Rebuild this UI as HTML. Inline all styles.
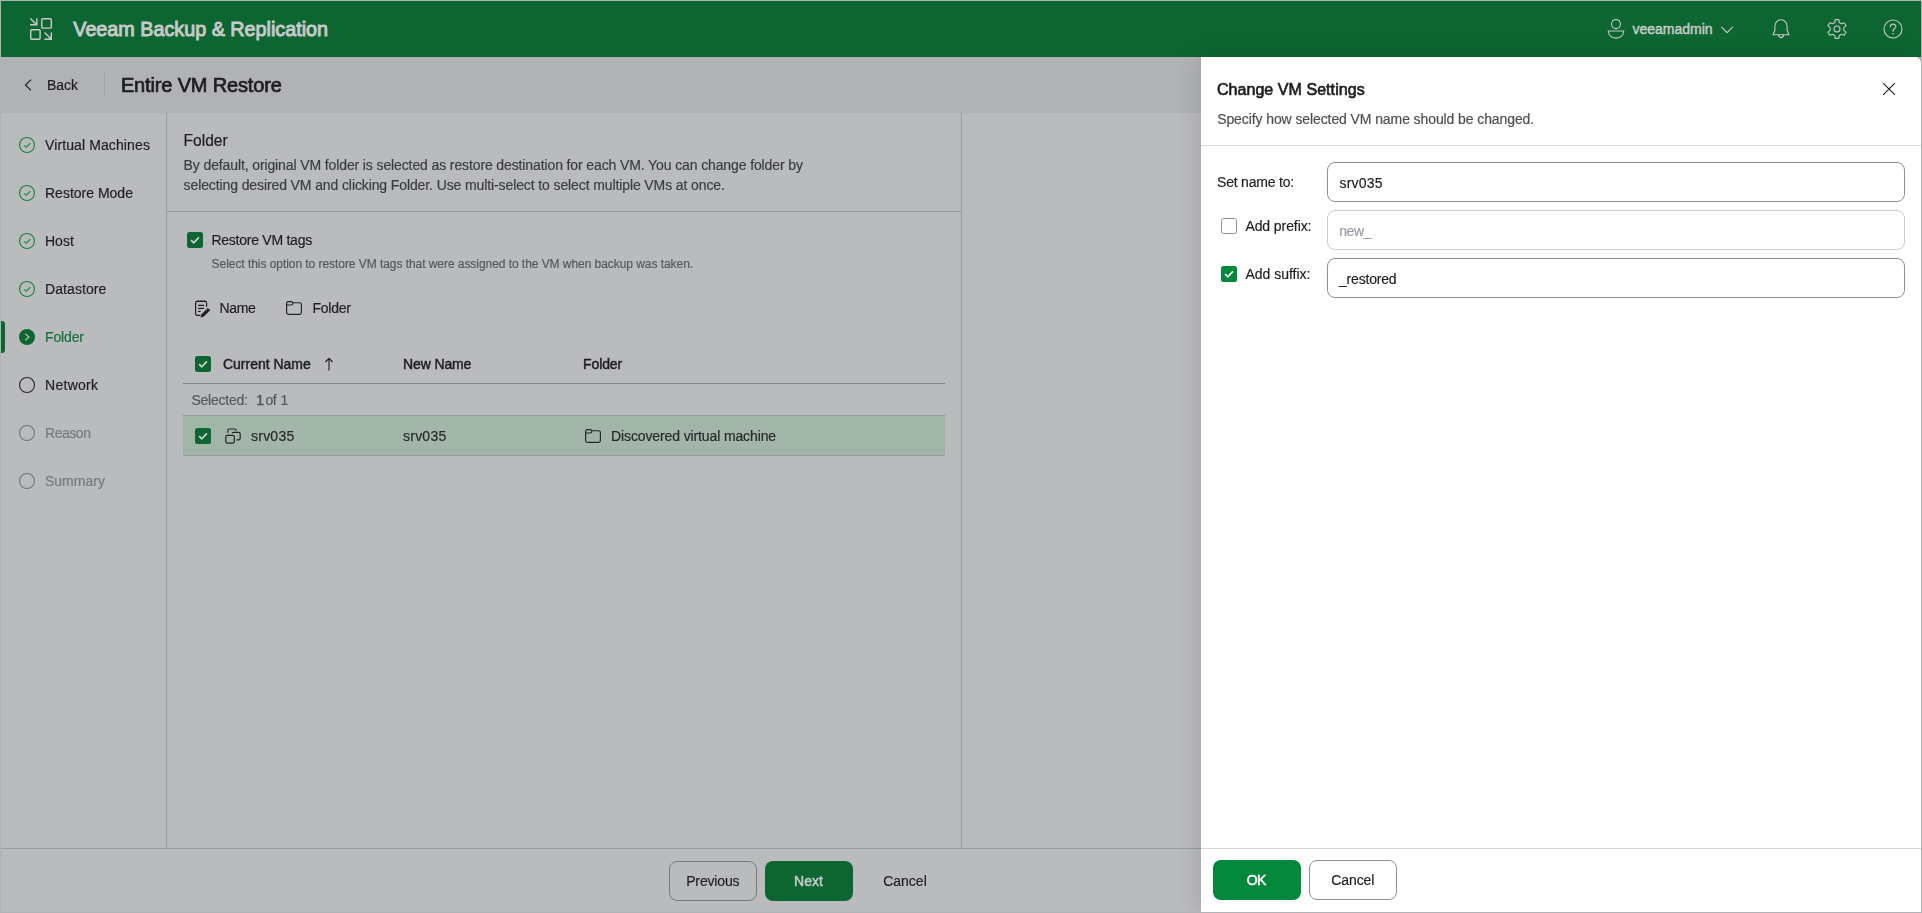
<!DOCTYPE html>
<html>
<head>
<meta charset="utf-8">
<title>Veeam Backup &amp; Replication</title>
<style>
html,body{margin:0;padding:0;}
body{width:1922px;height:913px;overflow:hidden;background:#b1b2b4;font-family:"Liberation Sans",sans-serif;position:relative;}
#app{position:absolute;left:1px;top:1px;width:1920px;height:911px;background:#babbbd;overflow:hidden;}
.abs{position:absolute;}
.t{position:absolute;white-space:nowrap;line-height:20px;height:20px;color:#1d1e20;font-size:14px;-webkit-text-stroke:0.18px currentColor;}
.ly{position:absolute;left:0;top:0;right:0;bottom:0;will-change:transform;}
#hdr{left:0;top:0;width:1920px;height:56px;background:#0d6632;}
#sub{left:0;top:56px;width:1920px;height:56px;background:#b1b2b4;}
#side{left:0;top:112px;width:165px;height:735px;border-right:1px solid #9a9ea2;}
#main{left:166px;top:112px;width:794px;height:735px;border-right:1px solid #9a9ea2;}
#foot{left:0;top:847px;width:1200px;height:64px;border-top:1px solid #9a9ea2;}
.btn{position:absolute;box-sizing:border-box;border-radius:8px;height:40px;}
#panel{left:1200px;top:56px;width:720px;height:855px;background:#fff;border-top-right-radius:6px;box-shadow:-4px 0 22px rgba(0,0,0,0.11);}
.inp{position:absolute;box-sizing:border-box;left:126px;width:578px;height:40px;border:1px solid #8a9099;border-radius:8px;}
svg{position:absolute;overflow:visible;}
.cb{position:absolute;width:16px;height:16px;border-radius:2.5px;background:#0d6632;}
.cb svg{left:0;top:0;}
</style>
</head>
<body>
<div id="app">
<div id="hdr" class="abs">
<svg style="left:28px;top:16px" width="24" height="24" viewBox="29 17 24 24" fill="none" stroke="#c9caca" stroke-width="1.4">
  <path d="M30.4 18.4 L36.8 24.8 M36.8 18.2 V24.8 H30.1" />
  <rect x="41.8" y="18.7" width="9.5" height="9.4" rx="0.9"/>
  <rect x="30.7" y="29.8" width="9.4" height="9.4" rx="0.9"/>
  <path d="M44.6 32.6 L51.3 39.3 M51.3 32.4 V39.3 H44.4" />
</svg>
<div class="t" style="left:72.30px;top:13.00px;font-size:19.75px;color:#c8c9c9;height:30px;line-height:30px;-webkit-text-stroke:0.95px #c8c9c9;">Veeam Backup &amp; Replication</div>
<svg style="left:1606px;top:17px" width="20" height="24" viewBox="1607 18 20 24" fill="none" stroke="#c3c8c5" stroke-width="1.1">
  <circle cx="1616" cy="24.1" r="4.5"/>
  <path d="M1608.3 31 H1623.7 C1623.7 35.3 1620.4 38.1 1616 38.1 C1611.6 38.1 1608.3 35.3 1608.3 31 Z"/>
</svg>
<div class="t" style="left:1631.40px;top:18.00px;font-size:14px;color:#c9cbca;-webkit-text-stroke:0.45px #c9cbca;">veeamadmin</div>
<svg style="left:1718.1px;top:23.1px" width="16" height="12" viewBox="1720 25 16 12" fill="none" stroke="#c3c8c5" stroke-width="1.1"><path d="M1722.4 27.8 L1728.1 33.6 L1733.8 27.8"/></svg>
<svg style="left:1769.1px;top:16px" width="22" height="24" viewBox="1771 18 22 24" fill="none" stroke="#c3c8c5" stroke-width="1.1" stroke-linejoin="round">
  <path d="M1774 35.8 H1790 L1788.1 31.3 V27.2 C1788.1 23.5 1785.5 20.8 1782 20.8 C1778.5 20.8 1775.9 23.5 1775.9 27.2 V31.3 Z"/>
  <path d="M1779.4 35.9 C1779.6 37.5 1780.6 38.6 1782 38.6 C1783.4 38.6 1784.4 37.5 1784.6 35.9"/>
</svg>
<svg style="left:1823.9px;top:16.1px" width="24" height="24" viewBox="-12 -12 24 24" fill="none" stroke="#c3c8c5" stroke-width="1.1" stroke-linejoin="round"><circle cx="0" cy="0" r="3"/><path d="M-1.82 -9.37 L1.82 -9.37 L2.26 -6.57 L4.56 -5.25 L7.21 -6.27 L9.03 -3.11 L6.82 -1.33 L6.82 1.33 L9.03 3.11 L7.21 6.27 L4.56 5.25 L2.26 6.57 L1.82 9.37 L-1.82 9.37 L-2.26 6.57 L-4.56 5.25 L-7.21 6.27 L-9.03 3.11 L-6.82 1.33 L-6.82 -1.33 L-9.03 -3.11 L-7.21 -6.27 L-4.56 -5.25 L-2.26 -6.57 Z"/></svg>
<svg style="left:1880px;top:16.1px" width="24" height="24" viewBox="-12 -12 24 24" fill="none" stroke="#c3c8c5" stroke-width="1.1">
  <circle cx="0" cy="0" r="9"/>
  <path d="M-2.7 -2.3 C-2.7 -4 -1.5 -4.9 0 -4.9 C1.6 -4.9 2.8 -3.9 2.8 -2.5 C2.8 -0.6 0 -0.3 0 2.2" stroke-linecap="round"/>
  <circle cx="0" cy="4.7" r="0.8" fill="#c3c8c5" stroke="none"/>
</svg>
</div>
<div id="sub" class="abs"><div class="ly">
<svg style="left:22px;top:21px" width="10" height="14" viewBox="0 0 10 14" fill="none" stroke="#1d1e20" stroke-width="1.1"><path d="M8 1.6 L2.4 7 L8 12.4"/></svg>
<div class="t" style="left:45.90px;top:18.00px;font-size:14px;color:#1d1e20;">Back</div>
<div class="abs" style="left:103px;top:16px;width:1px;height:24px;background:#a2a3a5;"></div>
<div class="t" style="left:119.90px;top:13.00px;font-size:20px;color:#1d1e20;height:30px;line-height:30px;letter-spacing:-0.15px;-webkit-text-stroke:0.7px #1d1e20;">Entire VM Restore</div>
</div></div>
<div id="side" class="abs"><div class="ly">
<svg style="left:16px;top:22px" width="20" height="20" viewBox="-10 -10 20 20" fill="none" stroke="#15803c" stroke-width="1.1"><circle r="7.45"/><path d="M-2.8 0.3 L-0.7 2.3 L3.3 -1.9"/></svg>
<div class="t" style="left:44.00px;top:22.00px;font-size:14px;color:#1d1e20;letter-spacing:0.11px;">Virtual Machines</div>
<svg style="left:16px;top:70px" width="20" height="20" viewBox="-10 -10 20 20" fill="none" stroke="#15803c" stroke-width="1.1"><circle r="7.45"/><path d="M-2.8 0.3 L-0.7 2.3 L3.3 -1.9"/></svg>
<div class="t" style="left:44.00px;top:70.00px;font-size:14px;color:#1d1e20;">Restore Mode</div>
<svg style="left:16px;top:118px" width="20" height="20" viewBox="-10 -10 20 20" fill="none" stroke="#15803c" stroke-width="1.1"><circle r="7.45"/><path d="M-2.8 0.3 L-0.7 2.3 L3.3 -1.9"/></svg>
<div class="t" style="left:44.00px;top:118.00px;font-size:14px;color:#1d1e20;">Host</div>
<svg style="left:16px;top:166px" width="20" height="20" viewBox="-10 -10 20 20" fill="none" stroke="#15803c" stroke-width="1.1"><circle r="7.45"/><path d="M-2.8 0.3 L-0.7 2.3 L3.3 -1.9"/></svg>
<div class="t" style="left:44.00px;top:166.00px;font-size:14px;color:#1d1e20;letter-spacing:0.08px;">Datastore</div>
<div class="abs" style="left:0;top:208px;width:4px;height:32px;background:#0d6632;border-radius:0 3px 3px 0;"></div>
<svg style="left:16px;top:214px" width="20" height="20" viewBox="-10 -10 20 20" fill="none" stroke="none" stroke-width="1.1"><circle r="8" fill="#0d6632" stroke="none"/><path d="M-1.7 -3.4 L1.9 0 L-1.7 3.4" stroke="#c3c8c5"/></svg>
<div class="t" style="left:44.00px;top:214.00px;font-size:14px;color:#14703a;letter-spacing:-0.13px;">Folder</div>
<svg style="left:16px;top:262px" width="20" height="20" viewBox="-10 -10 20 20" fill="none" stroke="#232426" stroke-width="1.1"><circle r="7.45"/></svg>
<div class="t" style="left:44.00px;top:262.00px;font-size:14px;color:#1d1e20;letter-spacing:0.28px;">Network</div>
<svg style="left:16px;top:310px" width="20" height="20" viewBox="-10 -10 20 20" fill="none" stroke="#6d767b" stroke-width="1.1"><circle r="7.45"/></svg>
<div class="t" style="left:44.00px;top:310.00px;font-size:14px;color:#727b80;letter-spacing:-0.46px;">Reason</div>
<svg style="left:16px;top:358px" width="20" height="20" viewBox="-10 -10 20 20" fill="none" stroke="#6d767b" stroke-width="1.1"><circle r="7.45"/></svg>
<div class="t" style="left:44.00px;top:358.00px;font-size:14px;color:#727b80;">Summary</div>
</div></div>
<div id="main" class="abs"><div class="ly">
<div class="t" style="left:16.50px;top:18.00px;font-size:15.6px;color:#1d1e20;-webkit-text-stroke:0.2px #1d1e20;">Folder</div>
<div class="t" style="left:16.60px;top:42.00px;font-size:14px;color:#3a3c3f;letter-spacing:-0.116px;">By default, original VM folder is selected as restore destination for each VM. You can change folder by</div>
<div class="t" style="left:16.60px;top:62.00px;font-size:14px;color:#3a3c3f;letter-spacing:-0.108px;">selecting desired VM and clicking Folder. Use multi-select to select multiple VMs at once.</div>
<div class="abs" style="left:0;top:98px;width:794px;height:1px;background:#9a9ea2;"></div>
<div class="cb" style="left:20px;top:119px;"><svg width="16" height="16" viewBox="0 0 16 16" fill="none" stroke="#cdd0ce" stroke-width="1.7"><path d="M4.1 8.2 L6.8 10.8 L11.9 5.4"/></svg></div>
<div class="t" style="left:44.40px;top:117.00px;font-size:14px;color:#1d1e20;letter-spacing:-0.247px;">Restore VM tags</div>
<div class="t" style="left:44.60px;top:141.00px;font-size:12px;color:#55585c;letter-spacing:-0.054px;">Select this option to restore VM tags that were assigned to the VM when backup was taken.</div>
<svg style="left:27px;top:186px" width="18" height="20" viewBox="194 299 18 20" fill="none" stroke="#1f2022" stroke-width="1.2">
  <path d="M200.2 315.4 H197.2 C196.2 315.4 195.6 314.8 195.6 313.8 V302.9 C195.6 301.9 196.2 301.3 197.2 301.3 H205 C206 301.3 206.6 301.9 206.6 302.9 V306.8"/>
  <path d="M198 300 V301.3 M201.1 300 V301.3 M204.3 300 V301.3" stroke-width="1"/>
  <path d="M198.2 305.3 H204.1 M198.2 308.3 H204.1 M198.2 311.4 H200.6"/>
  <path d="M208 308.4 L209.8 310.2 L203.6 316.2 L200.9 317 L201.7 314.4 Z" fill="#1f2022" stroke-width="0.8" stroke-linejoin="round"/>
</svg>
<div class="t" style="left:52.40px;top:185.00px;font-size:14px;color:#1d1e20;letter-spacing:-0.282px;">Name</div>
<svg style="left:119px;top:188px" width="16" height="14" viewBox="0 0 16 14" fill="none" stroke="#1f2022" stroke-width="1.15"><path d="M0.6 3.4 V11.4 C0.6 12.5 1.4 13.3 2.5 13.3 H13.5 C14.6 13.3 15.4 12.5 15.4 11.4 V3.6 C15.4 2.5 14.6 1.7 13.5 1.7 H6.9 M0.6 3.4 V2.4 C0.6 1.3 1.4 0.6 2.4 0.6 H5 C6.2 0.6 6.9 1.2 6.9 2.2 C6.9 3.2 6.2 4 5 4 H0.6"/></svg>
<div class="t" style="left:145.50px;top:185.00px;font-size:14px;color:#1d1e20;letter-spacing:-0.257px;">Folder</div>
<div class="cb" style="left:28px;top:243px;"><svg width="16" height="16" viewBox="0 0 16 16" fill="none" stroke="#cdd0ce" stroke-width="1.7"><path d="M4.1 8.2 L6.8 10.8 L11.9 5.4"/></svg></div>
<div class="t" style="left:56.00px;top:241.00px;font-size:14px;color:#1d1e20;letter-spacing:-0.02px;-webkit-text-stroke:0.45px #1d1e20;">Current Name</div>
<svg style="left:156px;top:243px" width="12" height="16" viewBox="323 356 12 16" fill="none" stroke="#1f2022" stroke-width="1.1"><path d="M329 370.6 V358.4 M325.4 362 L329 358.3 L332.6 362"/></svg>
<div class="t" style="left:236.10px;top:241.00px;font-size:14px;color:#1d1e20;letter-spacing:-0.135px;-webkit-text-stroke:0.45px #1d1e20;">New Name</div>
<div class="t" style="left:416.10px;top:241.00px;font-size:14px;color:#1d1e20;letter-spacing:-0.137px;-webkit-text-stroke:0.45px #1d1e20;">Folder</div>
<div class="abs" style="left:16px;top:270px;width:762px;height:1px;background:#82868a;"></div>
<div class="t" style="left:24.40px;top:277.00px;font-size:14px;color:#55585c;letter-spacing:-0.234px;">Selected:</div>
<div class="t" style="left:89.30px;top:277.00px;font-size:14px;color:#55585c;-webkit-text-stroke:0.45px #55585c;">1</div>
<div class="t" style="left:98.40px;top:277.00px;font-size:14px;color:#55585c;letter-spacing:-0.45px;word-spacing:1px;">of 1</div>
<div class="abs" style="left:16px;top:302px;width:762px;height:41px;background:#a1b6a9;box-sizing:border-box;border-top:1px solid #999c9e;border-bottom:1px solid #999c9e;"></div>
<div class="cb" style="left:28px;top:315px;"><svg width="16" height="16" viewBox="0 0 16 16" fill="none" stroke="#cdd0ce" stroke-width="1.7"><path d="M4.1 8.2 L6.8 10.8 L11.9 5.4"/></svg></div>
<svg style="left:57px;top:313.6px" width="18" height="18" viewBox="224 427 18 18" fill="none" stroke="#222426" stroke-width="1.2">
  <rect x="225.8" y="435.3" width="8.5" height="7.8" rx="1.6"/>
  <path d="M236.4 439.9 H238.5 C239.5 439.9 240.2 439.2 240.2 438.2 V434 C240.2 433 239.5 432.3 238.5 432.3 H233.6 C232.9 432.3 232.4 432.6 232.1 433.1"/>
  <path d="M227.8 432.8 V430.7 C227.8 429.7 228.5 429 229.5 429 H234.5 C235.5 429 236.2 429.7 236.2 430.7"/>
</svg>
<div class="t" style="left:84.00px;top:313.00px;font-size:14px;color:#26282a;letter-spacing:0.236px;">srv035</div>
<div class="t" style="left:236.00px;top:313.00px;font-size:14px;color:#26282a;letter-spacing:0.236px;">srv035</div>
<svg style="left:418px;top:316px" width="16" height="14" viewBox="0 0 16 14" fill="none" stroke="#222426" stroke-width="1.15"><path d="M0.6 3.4 V11.4 C0.6 12.5 1.4 13.3 2.5 13.3 H13.5 C14.6 13.3 15.4 12.5 15.4 11.4 V3.6 C15.4 2.5 14.6 1.7 13.5 1.7 H6.9 M0.6 3.4 V2.4 C0.6 1.3 1.4 0.6 2.4 0.6 H5 C6.2 0.6 6.9 1.2 6.9 2.2 C6.9 3.2 6.2 4 5 4 H0.6"/></svg>
<div class="t" style="left:444.10px;top:313.00px;font-size:14px;color:#26282a;letter-spacing:-0.123px;">Discovered virtual machine</div>
</div></div>
<div id="foot" class="abs"><div class="ly">
<div class="btn" style="left:668px;top:12px;width:88px;border:1px solid #77797c;"></div>
<div class="t" style="left:685.20px;top:22.00px;font-size:14px;color:#1d1e20;letter-spacing:-0.153px;">Previous</div>
<div class="btn" style="left:764px;top:12px;width:88px;background:#0d6632;"></div>
<div class="t" style="left:793.00px;top:22.00px;font-size:14px;color:#c9cbca;letter-spacing:0.07px;-webkit-text-stroke:0.45px #c9cbca;">Next</div>
<div class="t" style="left:882.20px;top:22.00px;font-size:14px;color:#1d1e20;">Cancel</div>
</div></div>
<div id="panel" class="abs"><div class="ly">
<div class="t" style="left:15.90px;top:21.00px;font-size:16px;color:#1d1e20;height:24px;line-height:24px;letter-spacing:0.06px;-webkit-text-stroke:0.65px #1d1e20;">Change VM Settings</div>
<svg style="left:681px;top:25px" width="14" height="14" viewBox="1882 82 14 14" fill="none" stroke="#1d1e20" stroke-width="1.1"><path d="M1883.1 83.1 L1894.9 94.9 M1894.9 83.1 L1883.1 94.9"/></svg>
<div class="t" style="left:16.20px;top:52.00px;font-size:14px;color:#4b4e53;letter-spacing:-0.096px;">Specify how selected VM name should be changed.</div>
<div class="abs" style="left:0;top:88px;width:720px;height:1px;background:#d5d8db;"></div>
<div class="t" style="left:16.00px;top:115.00px;font-size:14px;color:#1d1e20;letter-spacing:-0.2px;">Set name to:</div>
<div class="inp" style="top:105px;"></div>
<div class="t" style="left:138.40px;top:116.00px;font-size:14px;color:#1d1e20;letter-spacing:0.236px;">srv035</div>
<div class="abs" style="left:20px;top:161px;width:16px;height:16px;box-sizing:border-box;border:1px solid #8a9099;border-radius:2.5px;background:#fff;"></div>
<div class="t" style="left:44.40px;top:159.00px;font-size:14px;color:#1d1e20;letter-spacing:-0.08px;">Add prefix:</div>
<div class="inp" style="top:153px;border-color:#c9cdd1;"></div>
<div class="t" style="left:138.20px;top:164.00px;font-size:14px;color:#969ca2;letter-spacing:-0.39px;">new_</div>
<div class="cb" style="left:20px;top:209px;background:#04883b;"><svg width="16" height="16" viewBox="0 0 16 16" fill="none" stroke="#fff" stroke-width="1.7"><path d="M4.1 8.2 L6.8 10.8 L11.9 5.4"/></svg></div>
<div class="t" style="left:44.40px;top:207.00px;font-size:14px;color:#1d1e20;">Add suffix:</div>
<div class="inp" style="top:201px;"></div>
<div class="t" style="left:138.00px;top:212.00px;font-size:14px;color:#1d1e20;letter-spacing:-0.193px;">_restored</div>
<div class="abs" style="left:0;top:791px;width:720px;height:1px;background:#d2d5d8;"></div>
<div class="btn" style="left:12px;top:803px;width:88px;background:#04883b;"></div>
<div class="t" style="left:45.80px;top:813.00px;font-size:14px;color:#fff;letter-spacing:-0.6px;-webkit-text-stroke:0.5px #fff;">OK</div>
<div class="btn" style="left:108px;top:803px;width:88px;border:1px solid #8a9099;background:#fff;"></div>
<div class="t" style="left:130.30px;top:813.00px;font-size:14px;color:#1d1e20;letter-spacing:-0.116px;">Cancel</div>
</div></div>
</div>
</body>
</html>
